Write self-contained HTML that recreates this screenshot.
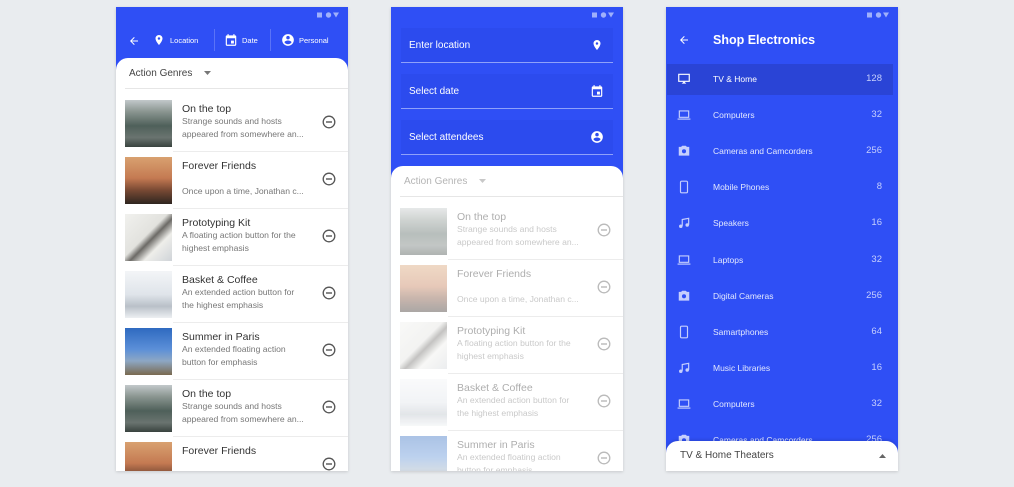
<!DOCTYPE html>
<html><head><meta charset="utf-8"><style>
*{margin:0;padding:0;box-sizing:border-box}
body{width:1014px;height:487px;background:#e9ecef;font-family:"Liberation Sans",sans-serif;position:relative;overflow:hidden}
.a{position:absolute}
.panel{position:absolute;top:7px;width:232px;height:464px;background:#2f4ff5;overflow:hidden;box-shadow:0 1px 3px rgba(0,0,0,.15)}
.clip{position:absolute;top:7px;width:232px;height:464px;overflow:hidden}
.sb{position:absolute;top:5px;right:7px;width:24px;height:6px}
.card{position:absolute;left:0;width:232px;background:#fff;border-radius:12px 12px 0 0}
.t{position:absolute;font-size:10.5px;color:#333;white-space:nowrap}
.s{position:absolute;font-size:8.6px;color:#777;line-height:13px;white-space:nowrap}
.img{position:absolute;left:9px;width:47px;height:47px}
.div{position:absolute;left:9px;right:0;height:1px;background:#e6e6e6}
.w{color:#fff;font-size:8.5px;position:absolute;white-space:nowrap}
.cnt{position:absolute;right:16px;color:#c6cffd;font-size:9.5px}
</style></head><body>

<!-- Panel 1 -->
<div class="panel" style="left:116px">
<svg class="sb" viewBox="0 0 24 6"><rect x="0" y="0.5" width="5" height="5" fill="#9fb0fb"/><circle cx="11.5" cy="3" r="2.7" fill="#9fb0fb"/><path d="M16 0.5h6l-3 5z" fill="#9fb0fb"/></svg>
<svg class="a" style="left:12px;top:28px" width="12" height="12" viewBox="0 0 24 24"><path d="M20 11H7.8l5.6-5.6L12 4l-8 8 8 8 1.4-1.4L7.8 13H20z" fill="#fff"/></svg>
<svg class="a" style="left:37px;top:26px" width="12" height="14" viewBox="0 0 24 24"><path d="M12 2C8.1 2 5 5.1 5 9c0 5.2 7 13 7 13s7-7.8 7-13c0-3.9-3.1-7-7-7zm0 9.5a2.5 2.5 0 110-5 2.5 2.5 0 010 5z" fill="#fff"/></svg>
<div class="w" style="left:54px;top:29px;font-size:7.5px">Location</div>
<div class="a" style="left:98px;top:22px;width:1px;height:22px;background:#5a73f7"></div>
<svg class="a" style="left:108px;top:26px" width="14" height="14" viewBox="0 0 24 24"><path d="M19 4h-1V2h-2v2H8V2H6v2H5a2 2 0 00-2 2v14a2 2 0 002 2h14a2 2 0 002-2V6a2 2 0 00-2-2zm0 16H5V9h14zm-7-7h5v5h-5z" fill="#fff"/></svg>
<div class="w" style="left:126px;top:29px;font-size:7.5px">Date</div>
<div class="a" style="left:154px;top:22px;width:1px;height:22px;background:#5a73f7"></div>
<svg class="a" style="left:165px;top:26px" width="14" height="14" viewBox="0 0 24 24"><path d="M12 2a10 10 0 100 20 10 10 0 000-20zm0 3a3 3 0 110 6 3 3 0 010-6zm0 14.2a7.2 7.2 0 01-6-3.2c0-2 4-3.1 6-3.1s6 1.1 6 3.1a7.2 7.2 0 01-6 3.2z" fill="#fff"/></svg>
<div class="w" style="left:183px;top:29px;font-size:7.5px">Personal</div>

<div class="card" style="top:51px;height:420px">
<div class="t" style="left:13px;top:10px;font-size:10px;color:#444">Action Genres</div>
<svg class="a" style="left:88px;top:13px" width="7" height="4"><path d="M0 0h7L3.5 4z" fill="#777"/></svg>
<div class="div" style="top:30px"></div>
</div>
</div>
<div class="clip" id="c1" style="left:116px"></div>

<!-- Panel 2 -->
<div class="panel" style="left:391px">
<svg class="sb" viewBox="0 0 24 6"><rect x="0" y="0.5" width="5" height="5" fill="#9fb0fb"/><circle cx="11.5" cy="3" r="2.7" fill="#9fb0fb"/><path d="M16 0.5h6l-3 5z" fill="#9fb0fb"/></svg>
<div class="a" style="left:10px;top:21px;width:212px;height:34px;background:#2c4bee"></div>
<div class="a" style="left:10px;top:55px;width:212px;height:1px;background:#8fa1fa"></div>
<div class="w" style="left:18px;top:33px;font-size:10px">Enter location</div>
<svg class="a" style="left:200px;top:31px" width="12" height="14" viewBox="0 0 24 24"><path d="M12 2C8.1 2 5 5.1 5 9c0 5.2 7 13 7 13s7-7.8 7-13c0-3.9-3.1-7-7-7zm0 9.5a2.5 2.5 0 110-5 2.5 2.5 0 010 5z" fill="#fff"/></svg>
<div class="a" style="left:10px;top:67px;width:212px;height:34px;background:#2c4bee"></div>
<div class="a" style="left:10px;top:101px;width:212px;height:1px;background:#8fa1fa"></div>
<div class="w" style="left:18px;top:79px;font-size:10px">Select date</div>
<svg class="a" style="left:199px;top:77px" width="14" height="14" viewBox="0 0 24 24"><path d="M19 4h-1V2h-2v2H8V2H6v2H5a2 2 0 00-2 2v14a2 2 0 002 2h14a2 2 0 002-2V6a2 2 0 00-2-2zm0 16H5V9h14zm-7-7h5v5h-5z" fill="#fff"/></svg>
<div class="a" style="left:10px;top:113px;width:212px;height:34px;background:#2c4bee"></div>
<div class="a" style="left:10px;top:147px;width:212px;height:1px;background:#8fa1fa"></div>
<div class="w" style="left:18px;top:125px;font-size:10px">Select attendees</div>
<svg class="a" style="left:199px;top:123px" width="14" height="14" viewBox="0 0 24 24"><path d="M12 2a10 10 0 100 20 10 10 0 000-20zm0 3a3 3 0 110 6 3 3 0 010-6zm0 14.2a7.2 7.2 0 01-6-3.2c0-2 4-3.1 6-3.1s6 1.1 6 3.1a7.2 7.2 0 01-6 3.2z" fill="#fff"/></svg>
<div class="card" style="top:159px;height:320px">
<div style="opacity:.4">
<div class="t" style="left:13px;top:10px;font-size:10px;color:#444">Action Genres</div>
<svg class="a" style="left:88px;top:13px" width="7" height="4"><path d="M0 0h7L3.5 4z" fill="#777"/></svg>
</div>
<div class="div" style="top:30px"></div>
</div>
</div>
<div class="clip" id="c2" style="left:391px"></div>

<!-- Panel 3 -->
<div class="panel" style="left:666px">
<svg class="sb" viewBox="0 0 24 6"><rect x="0" y="0.5" width="5" height="5" fill="#9fb0fb"/><circle cx="11.5" cy="3" r="2.7" fill="#9fb0fb"/><path d="M16 0.5h6l-3 5z" fill="#9fb0fb"/></svg>
<svg class="a" style="left:12px;top:27px" width="12" height="12" viewBox="0 0 24 24"><path d="M20 11H7.8l5.6-5.6L12 4l-8 8 8 8 1.4-1.4L7.8 13H20z" fill="#fff"/></svg>
<div class="w" style="left:47px;top:26px;font-size:12.5px;font-weight:bold">Shop Electronics</div>
<div class="a" style="left:1px;top:57px;width:226px;height:31px;background:#2a44d6"></div>
<div id="rows"></div>
<div class="card" style="top:434px;height:40px;box-shadow:0 -1px 3px rgba(0,0,0,.15)">
<div class="t" style="left:14px;top:9px;font-size:10px;color:#444">TV &amp; Home Theaters</div>
<svg class="a" style="left:213px;top:13px" width="7" height="4"><path d="M0 4h7L3.5 0z" fill="#666"/></svg>
</div>
</div>

<script>
var imgs=[
"linear-gradient(#c2c8cb 0%,#8a9590 25%,#4f605a 55%,#6a7470 80%,#39433f 100%)",
"linear-gradient(#d9a170 0%,#c47a52 45%,#7a4a34 70%,#2e2520 100%)",
"linear-gradient(135deg,#f1f1ee 0%,#e2e2de 45%,#6c6a66 55%,#eeeeea 70%,#cfd3d8 100%)",
"linear-gradient(#f3f5f7 0%,#dfe4ea 50%,#b9c0c8 75%,#eceff2 100%)",
"linear-gradient(#2f6ac0 0%,#5b8fd8 45%,#8da7c4 70%,#7a6a50 100%)"];
var items=[["On the top","Strange sounds and hosts","appeared from somewhere an..."],
["Forever Friends","","Once upon a time, Jonathan c..."],
["Prototyping Kit","A floating action button for the","highest emphasis"],
["Basket &amp; Coffee","An extended action button for","the highest emphasis"],
["Summer in Paris","An extended floating action","button for emphasis"]];
function build(id,start,n,op){
 var h="";
 for(var i=0;i<n;i++){var it=items[i%5],y=start-7+57*i;
  h+='<div class="a" style="left:0;top:'+y+'px;width:232px;height:57px;opacity:'+op+'">';
  h+='<div class="img" style="top:0;background:'+imgs[i%5]+'"></div>';
  h+='<div class="t" style="left:66px;top:3px">'+it[0]+'</div>';
  if(it[1])h+='<div class="s" style="left:66px;top:15px">'+it[1]+'</div>';
  h+='<div class="s" style="left:66px;top:28px">'+it[2]+'</div>';
  h+='<svg class="a" style="left:206px;top:15px" width="14" height="14" viewBox="0 0 14 14"><circle cx="7" cy="7" r="5.8" fill="none" stroke="#555" stroke-width="1.3"/><path d="M4 7h6" stroke="#555" stroke-width="1.4"/></svg>';
  h+='</div>';
  if(i<n-1)h+='<div class="a" style="left:57px;top:'+(y+51)+'px;width:175px;height:1px;background:#ececec"></div>';
 }
 document.getElementById(id).innerHTML=h;
}
build("c1",100,7,1);
build("c2",208,5,0.4);
var icons={
tv:'<path d="M3 4h18v12H3z" fill="none" stroke="#fff" stroke-width="2"/><path d="M8 20h8l-4-4z" fill="#fff"/>',
pc:'<path d="M4 5h16v11H4z" fill="none" stroke="#c6cffd" stroke-width="2"/><path d="M1 18h22v2H1z" fill="#c6cffd"/>',
cam:'<path d="M9 3L7 5H3v15h18V5h-4l-2-2z" fill="#c6cffd"/><circle cx="12" cy="12.5" r="3.5" fill="#2f4ff5"/>',
ph:'<rect x="6" y="2" width="12" height="20" rx="2" fill="none" stroke="#c6cffd" stroke-width="2"/>',
mu:'<path d="M9 17V6l11-2v11" fill="none" stroke="#c6cffd" stroke-width="2"/><circle cx="6.5" cy="17.5" r="3" fill="#c6cffd"/><circle cx="17.5" cy="15.5" r="3" fill="#c6cffd"/>'};
var rows=[["tv","TV &amp; Home","128"],["pc","Computers","32"],["cam","Cameras and Camcorders","256"],["ph","Mobile Phones","8"],["mu","Speakers","16"],["pc","Laptops","32"],["cam","Digital Cameras","256"],["ph","Samartphones","64"],["mu","Music Libraries","16"],["pc","Computers","32"],["cam","Cameras and Camcorders","256"]];
var r="";
rows.forEach(function(x,i){var y=72+36.1*i;
 r+='<svg class="a" style="left:11px;top:'+(y-7)+'px" width="14" height="14" viewBox="0 0 24 24">'+icons[x[0]]+'</svg>';
 r+='<div class="w" style="left:47px;top:'+(y-5)+'px;'+(i==0?'':'color:#e3e8fe')+'">'+x[1]+'</div>';
 r+='<div class="cnt" style="top:'+(y-6)+'px;right:16px">'+x[2]+'</div>';
});
document.getElementById("rows").innerHTML=r;
</script>
</body></html>
